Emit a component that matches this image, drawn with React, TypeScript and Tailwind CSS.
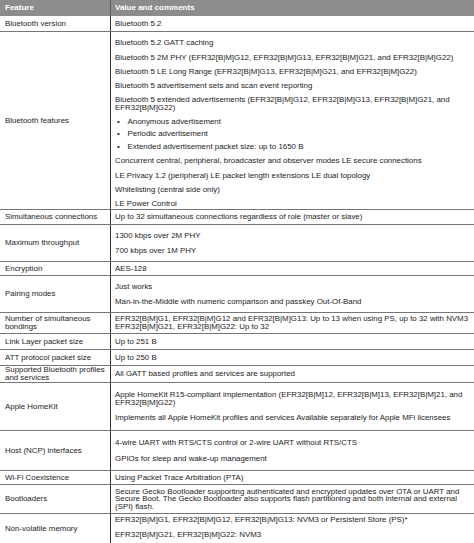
import React from "react";

function Row({
  h,
  label,
  children,
  vc = "justify-center",
}: {
  h: string;
  label: React.ReactNode;
  children: React.ReactNode;
  vc?: string;
}) {
  return (
    <div className={`flex box-border border-b border-[#767676] ${h}`}>
      <div className="w-[111px] shrink-0 border-r border-[#333333] flex items-center pl-[5px] leading-[8px]">
        <div>{label}</div>
      </div>
      <div className={`flex-1 flex flex-col pl-[4px] ${vc}`}>{children}</div>
    </div>
  );
}

function Bullet({ children }: { children: React.ReactNode }) {
  return (
    <div className="flex items-start">
      <span className="w-[12.5px] pl-[2px] shrink-0">•</span>
      <span>{children}</span>
    </div>
  );
}

export default function App() {
  return (
    <div className="w-[474px] h-[543px] overflow-hidden bg-white text-[#1c1c1c] font-['Liberation_Sans',Arial,sans-serif] text-[7.9px] leading-[8px] whitespace-nowrap">
      <div className="flex h-[16px] bg-[#8c8c8c] text-white font-bold text-[8px]">
        <div className="w-[111px] shrink-0 border-r border-[#5e5e5e] flex items-center pl-[5px]">
          Feature
        </div>
        <div className="flex-1 flex items-center pl-[4px]">Value and comments</div>
      </div>

      <Row h="h-[16px]" label="Bluetooth version">
        <div>Bluetooth 5.2</div>
      </Row>

      <Row h="h-[178px]" label="Bluetooth features" vc="justify-start pt-[7.3px]">
        <div>Bluetooth 5.2 GATT caching</div>
        <div className="mt-[6.3px]">
          Bluetooth 5 2M PHY (EFR32[B|M]G12, EFR32[B|M]G13, EFR32[B|M]G21, and EFR32[B|M]G22)
        </div>
        <div className="mt-[6.3px]">
          Bluetooth 5 LE Long Range (EFR32[B|M]G13, EFR32[B|M]G21, and EFR32[B|M]G22)
        </div>
        <div className="mt-[6.3px]">Bluetooth 5 advertisement sets and scan event reporting</div>
        <div className="mt-[6.3px]">
          Bluetooth 5 extended advertisements (EFR32[B|M]G12, EFR32[B|M]G13, EFR32[B|M]G21, and
          <br />
          EFR32[B|M]G22)
        </div>
        <div className="mt-[5.3px] flex flex-col gap-[4.7px]">
          <Bullet>Anonymous advertisement</Bullet>
          <Bullet>Periodic advertisement</Bullet>
          <Bullet>Extended advertisement packet size: up to 1650 B</Bullet>
        </div>
        <div className="mt-[6.3px]">
          Concurrent central, peripheral, broadcaster and observer modes LE secure connections
        </div>
        <div className="mt-[6.3px]">
          LE Privacy 1.2 (peripheral) LE packet length extensions LE dual topology
        </div>
        <div className="mt-[6.3px]">Whitelisting (central side only)</div>
        <div className="mt-[6.3px]">LE Power Control</div>
      </Row>

      <Row h="h-[15px]" label="Simultaneous connections">
        <div>Up to 32 simultaneous connections regardless of role (master or slave)</div>
      </Row>

      <Row h="h-[37px]" label="Maximum throughput" vc="justify-center gap-[7px]">
        <div>1300 kbps over 2M PHY</div>
        <div>700 kbps over 1M PHY</div>
      </Row>

      <Row h="h-[14px]" label="Encryption">
        <div>AES-128</div>
      </Row>

      <Row h="h-[37px]" label="Pairing modes" vc="justify-center gap-[7px]">
        <div>Just works</div>
        <div>Man-in-the-Middle with numeric comparison and passkey Out-Of-Band</div>
      </Row>

      <Row
        h="h-[21px]"
        label={
          <>
            Number of simultaneous
            <br />
            bondings
          </>
        }
      >
        <div>
          EFR32[B|M]G1, EFR32[B|M]G12 and EFR32[B|M]G13: Up to 13 when using PS, up to 32 with NVM3
          <br />
          EFR32[B|M]G21, EFR32[B|M]G22: Up to 32
        </div>
      </Row>

      <Row h="h-[16px]" label="Link Layer packet size">
        <div>Up to 251 B</div>
      </Row>

      <Row h="h-[16px]" label="ATT protocol packet size">
        <div>Up to 250 B</div>
      </Row>

      <Row
        h="h-[17px]"
        label={
          <>
            Supported Bluetooth profiles
            <br />
            and services
          </>
        }
      >
        <div>All GATT based profiles and services are supported</div>
      </Row>

      <Row h="h-[48px]" label="Apple HomeKit" vc="justify-center gap-[7px]">
        <div>
          Apple HomeKit R15-compliant implementation (EFR32[B|M]12, EFR32[B|M]13, EFR32[B|M]21, and
          <br />
          EFR32[B|M]G22)
        </div>
        <div>
          Implements all Apple HomeKit profiles and services Available separately for Apple MFi licensees
        </div>
      </Row>

      <Row h="h-[40px]" label="Host (NCP) interfaces" vc="justify-center gap-[8px]">
        <div>4-wire UART with RTS/CTS control or 2-wire UART without RTS/CTS</div>
        <div>GPIOs for sleep and wake-up management</div>
      </Row>

      <Row h="h-[14px]" label="Wi-Fi Coexistence">
        <div>Using Packet Trace Arbitration (PTA)</div>
      </Row>

      <Row h="h-[29px]" label="Bootloaders">
        <div className="leading-[7.6px]">
          Secure Gecko Bootloader supporting authenticated and encrypted updates over OTA or UART and
          <br />
          Secure Boot. The Gecko Bootloader also supports flash partitioning and both internal and external
          <br />
          (SPI) flash.
        </div>
      </Row>

      <Row h="h-[31px]" label="Non-volatile memory" vc="justify-start pt-[2px] gap-[7px]">
        <div>EFR32[B|M]G1, EFR32[B|M]G12, EFR32[B|M]G13: NVM3 or Persistent Store (PS)*</div>
        <div>EFR32[B|M]G21, EFR32[B|M]G22: NVM3</div>
      </Row>
    </div>
  );
}
